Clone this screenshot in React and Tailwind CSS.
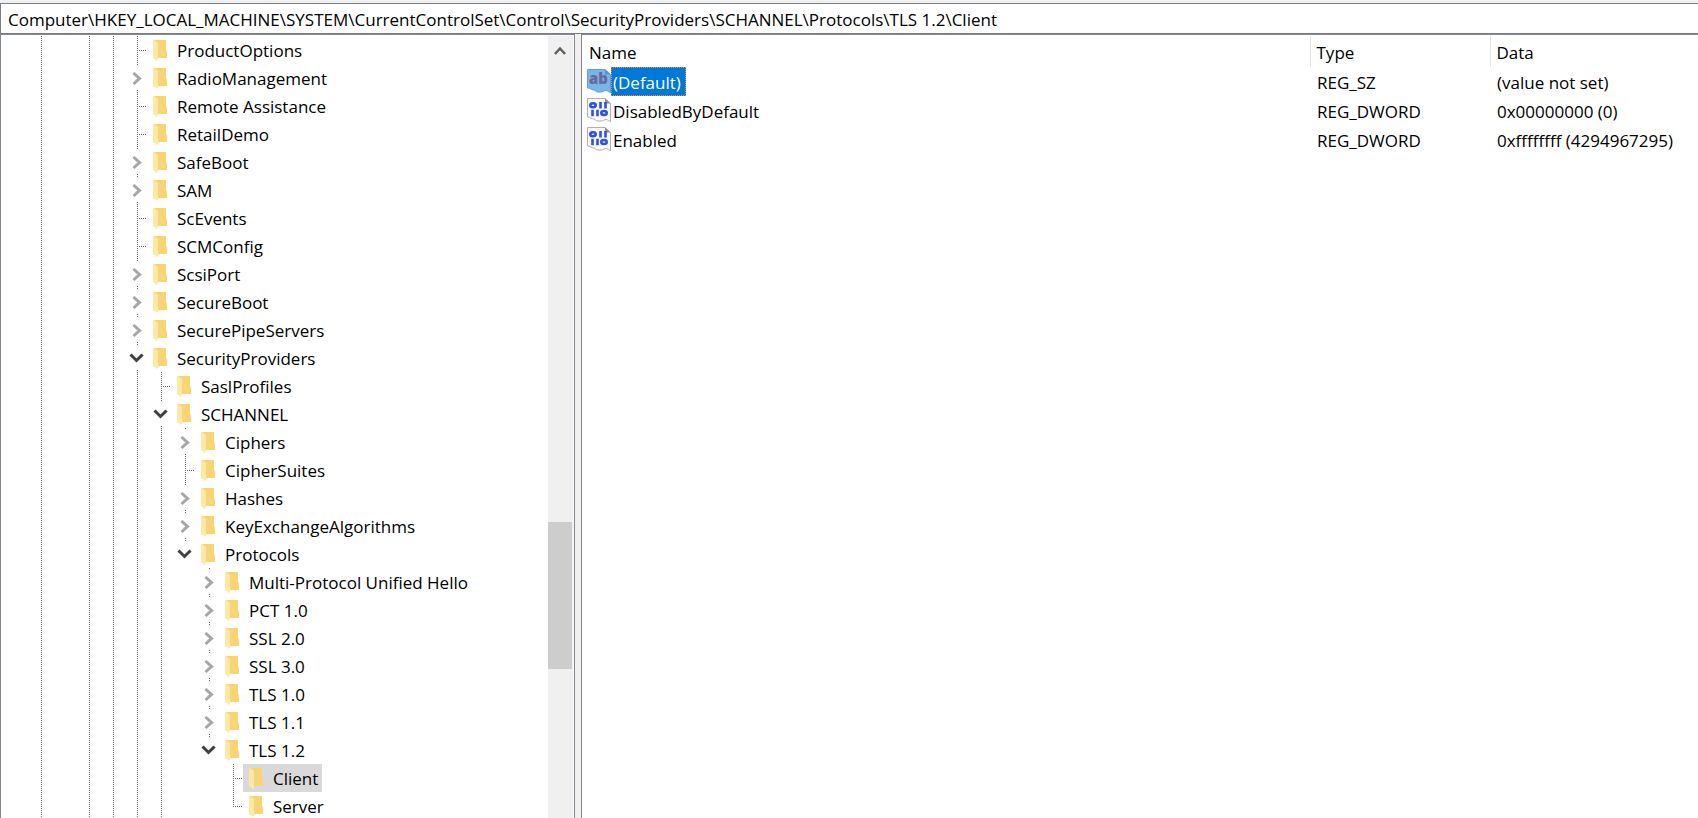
import React, { useState } from 'react';

// guides: one flag per level, 1 where a parent still has siblings below it
const keys = [
  { name: 'ProductOptions', guides: '1011' },
  { name: 'RadioManagement', guides: '1011', toggle: 'closed' },
  { name: 'Remote Assistance', guides: '1011' },
  { name: 'RetailDemo', guides: '1011' },
  { name: 'SafeBoot', guides: '1011', toggle: 'closed' },
  { name: 'SAM', guides: '1011', toggle: 'closed' },
  { name: 'ScEvents', guides: '1011' },
  { name: 'SCMConfig', guides: '1011' },
  { name: 'ScsiPort', guides: '1011', toggle: 'closed' },
  { name: 'SecureBoot', guides: '1011', toggle: 'closed' },
  { name: 'SecurePipeServers', guides: '1011', toggle: 'closed' },
  { name: 'SecurityProviders', guides: '1011', toggle: 'open' },
  { name: 'SaslProfiles', guides: '10111' },
  { name: 'SCHANNEL', guides: '10111', toggle: 'open' },
  { name: 'Ciphers', guides: '101111', toggle: 'closed' },
  { name: 'CipherSuites', guides: '101111' },
  { name: 'Hashes', guides: '101111', toggle: 'closed' },
  { name: 'KeyExchangeAlgorithms', guides: '101111', toggle: 'closed' },
  { name: 'Protocols', guides: '101111', toggle: 'open', last: true },
  { name: 'Multi-Protocol Unified Hello', guides: '1011110', toggle: 'closed' },
  { name: 'PCT 1.0', guides: '1011110', toggle: 'closed' },
  { name: 'SSL 2.0', guides: '1011110', toggle: 'closed' },
  { name: 'SSL 3.0', guides: '1011110', toggle: 'closed' },
  { name: 'TLS 1.0', guides: '1011110', toggle: 'closed' },
  { name: 'TLS 1.1', guides: '1011110', toggle: 'closed' },
  { name: 'TLS 1.2', guides: '1011110', toggle: 'open', last: true },
  { name: 'Client', guides: '10111100' },
  { name: 'Server', guides: '10111100', last: true },
];

const values = [
  { name: '(Default)', type: 'REG_SZ', data: '(value not set)', icon: StringIcon },
  { name: 'DisabledByDefault', type: 'REG_DWORD', data: '0x00000000 (0)', icon: BinaryIcon },
  { name: 'Enabled', type: 'REG_DWORD', data: '0xffffffff (4294967295)', icon: BinaryIcon },
];

function FolderIcon() {
  return (
    <svg width="14" height="22" viewBox="0 0 14 22" className="shrink-0" aria-hidden="true">
      <path d="M1 1h12v10l1 1.500V19H4z" fill="#f7d474" />
      <path d="M0 1l4.300 2.300c.5.3.7.6.7 1.200V21l-1 1-4-3z" fill="#ffe8a6" />
    </svg>
  );
}

function StringIcon() {
  return (
    <svg width="24" height="24" viewBox="0 0 24 24" className="mt-0.5 shrink-0 self-start" aria-hidden="true">
      <path d="M.5.5H18l5.500 5v18c-2 0-2.500-2-4.500-2s-2.500 1.500-5 1.500h-3c-2.500 0-2.500-2-4.500-2s-2.500-2-6-2z" fill="#76b6ea" stroke="#5fa2d8" />
      <path d="M18 .5v5h5.500z" fill="#4f93cf" />
      <text x="2" y="15" fontSize="15" fontWeight="800" fill="#656b9c" fontFamily="Open Sans, sans-serif">ab</text>
    </svg>
  );
}

function BinaryIcon() {
  return (
    <svg width="24" height="24" viewBox="0 0 24 24" className="mt-0.5 shrink-0 self-start" aria-hidden="true">
      <path d="M.5.5H18l5.500 5v18c-2 0-2.500-2-4.500-2s-2.500 1.500-5 1.500h-3c-2.500 0-2.500-2-4.500-2s-2.500-2-6-2z" fill="#f8f8f8" stroke="#b0b0b0" />
      <path d="M18 .5v5h5.500z" fill="#8f8f8f" />
      <g fill="none" stroke="#2f52dc" strokeWidth="2.600">
        <ellipse cx="6" cy="7.200" rx="2.700" ry="2" />
        <path d="M13.500 4v6.500M18.500 4v6.500M5.500 11.700v6.500M10.500 11.700v6.500" />
        <ellipse cx="17" cy="15" rx="2.700" ry="2" />
      </g>
    </svg>
  );
}

function Chevron({ open }) {
  return (
    <svg width="17" height="17" viewBox="0 0 17 17" fill="none" strokeWidth="3" aria-hidden="true">
      {open ? (
        <path d="M1.500 5.500l6 6 6-6" stroke="#404040" />
      ) : (
        <path d="M4.500 4l6 5.500-6 5.500" stroke="#a6a6a6" />
      )}
    </svg>
  );
}

const dotsDown = 'w-px bg-[repeating-linear-gradient(to_bottom,#6d6d6d_0_1px,transparent_1px_2px)]';
const dotsAcross = 'h-px bg-[repeating-linear-gradient(to_right,#6d6d6d_0_1px,transparent_1px_2px)]';

function Branch({ item }) {
  if (item.toggle) {
    return (
      <span className="flex w-6 shrink-0 flex-col items-center pl-[5px]">
        <span className={`h-px ${dotsDown}`} />
        <button type="button" aria-label={`Toggle ${item.name}`} className="flex h-[25px] w-[17px] items-center justify-center">
          <Chevron open={item.toggle === 'open'} />
        </button>
        {!item.last && <span className={`h-0.5 ${dotsDown}`} />}
      </span>
    );
  }
  return (
    <span className="flex w-6 shrink-0 pl-3.5">
      <span className={`${item.last ? 'h-[15px]' : 'h-7'} ${dotsDown}`} />
      <span className={`mt-3.5 ml-px flex-1 ${dotsAcross}`} />
    </span>
  );
}

function TreeRow({ item, selected, onSelect }) {
  return (
    <li className="flex h-7 pl-[26px]">
      {item.guides.split('').map((on, i) => (
        <span key={i} className="flex w-6 shrink-0 pl-3.5">
          {on === '1' && <span className={`h-7 ${dotsDown}`} />}
        </span>
      ))}
      <Branch item={item} />
      <button
        type="button"
        onClick={onSelect}
        className={`flex items-center gap-2.5 pr-1 pl-1.5 whitespace-nowrap ${selected ? 'bg-[#d9d9d9]' : ''}`}
      >
        <FolderIcon />
        <span className="pt-0.5">{item.name}</span>
      </button>
    </li>
  );
}

export default function App() {
  const [key, setKey] = useState('Client');
  const [value, setValue] = useState('(Default)');

  return (
    <div className="flex h-screen flex-col overflow-hidden bg-[#f0f0f0] pt-[3px] font-['Open_Sans',sans-serif] text-[17px] leading-6 text-black">
      {/* Address bar */}
      <input
        aria-label="Address"
        readOnly
        value="Computer\HKEY_LOCAL_MACHINE\SYSTEM\CurrentControlSet\Control\SecurityProviders\SCHANNEL\Protocols\TLS 1.2\Client"
        className="h-[31px] w-full shrink-0 border border-r-0 border-[#7a7d84] bg-white pt-0.5 pl-[7px] outline-none"
      />

      <div className="flex min-h-0 flex-1">
        {/* Key tree */}
        <nav className="flex w-[575px] shrink-0 overflow-hidden border border-b-0 border-[#828790] bg-white pt-px pr-px">
          <ul className="min-w-0 flex-1">
            {keys.map((item) => (
              <TreeRow key={item.name} item={item} selected={item.name === key} onSelect={() => setKey(item.name)} />
            ))}
          </ul>
          <div className="flex w-[25px] flex-col bg-[#f0f0f0] pr-px">
            <div className="flex flex-[485] flex-col">
              <button type="button" aria-label="Scroll up" className="flex h-7 items-center justify-center">
                <svg width="14" height="14" viewBox="0 0 14 14" fill="none" aria-hidden="true">
                  <path d="M2 11l5-5.500 5 5.500" stroke="#606060" strokeWidth="2.500" />
                </svg>
              </button>
            </div>
            <div className="flex-[147] bg-[#cdcdcd]" />
            <div className="flex-[149]" />
          </div>
        </nav>

        {/* Value list */}
        <main className="ml-1.5 min-w-0 flex-1 border-t border-l border-[#828790] bg-white pt-px">
          <table className="w-full table-fixed border-collapse text-left">
            <colgroup>
              <col />
              <col className="w-[180px]" />
              <col className="w-[208px]" />
            </colgroup>
            <thead>
              <tr className="h-[31px]">
                <th className="p-0 pt-0.5 pl-[7px] font-normal">Name</th>
                <th className="border-l border-[#e5e5e5] p-0 pt-0.5 pl-1.5 font-normal">Type</th>
                <th className="border-l border-[#e5e5e5] p-0 pt-0.5 pl-1.5 font-normal">Data</th>
              </tr>
            </thead>
            <tbody>
              {values.map((v) => (
                <tr key={v.name} className="h-[29px]">
                  <td className="p-0 pl-[5px]">
                    <button type="button" onClick={() => setValue(v.name)} className="flex h-[29px] items-center">
                      <v.icon />
                      <span
                        className={`flex h-[29px] items-center border border-dotted pt-0.5 pr-1 pl-px ${
                          v.name === value ? 'border-[#ff8728] bg-[#0078d7] text-white' : 'border-transparent'
                        }`}
                      >
                        {v.name}
                      </span>
                    </button>
                  </td>
                  <td className="p-0 pt-0.5 pl-[7px]">{v.type}</td>
                  <td className="p-0 pt-0.5 pl-[7px] whitespace-nowrap">{v.data}</td>
                </tr>
              ))}
            </tbody>
          </table>
        </main>
      </div>
    </div>
  );
}
